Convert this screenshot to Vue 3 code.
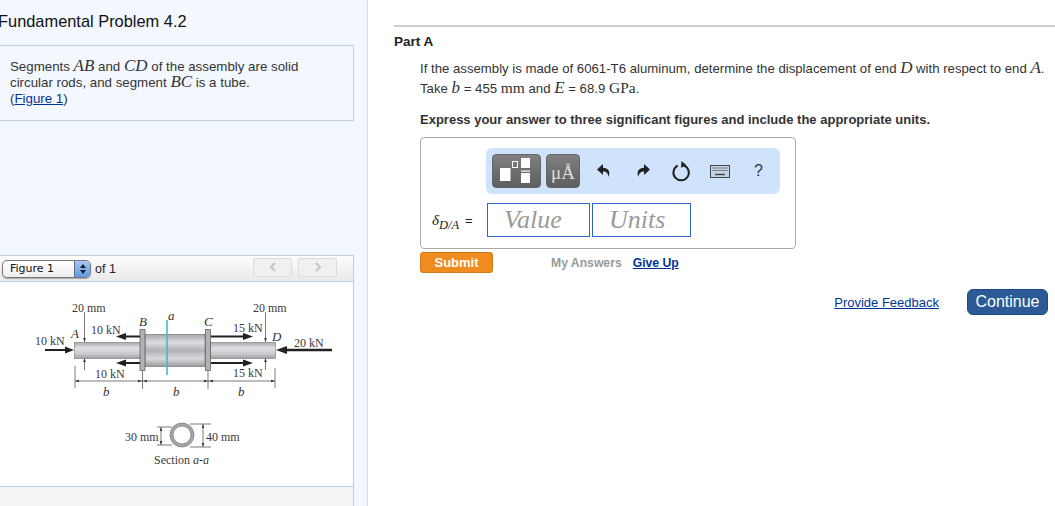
<script setup>
const dims = [
  { x: 72, y: 312, t: '20 mm' }, { x: 253, y: 312, t: '20 mm' },
  { x: 35, y: 345, t: '10 kN' }, { x: 91, y: 334, t: '10 kN' },
  { x: 233, y: 332, t: '15 kN' }, { x: 294, y: 347, t: '20 kN' },
  { x: 95, y: 378, t: '10 kN' }, { x: 233, y: 377, t: '15 kN' },
  { x: 125, y: 441, t: '30 mm' }, { x: 206, y: 441, t: '40 mm' }
]
const letters = [
  { x: 71, y: 338, t: 'A' }, { x: 139, y: 326, t: 'B' }, { x: 168, y: 320, t: 'a' },
  { x: 204, y: 326, t: 'C' }, { x: 272, y: 341, t: 'D' },
  { x: 103, y: 396, t: 'b' }, { x: 173, y: 396, t: 'b' }, { x: 238, y: 396, t: 'b' }
]
</script>

<template>
  <div class="page">
    <aside class="left">
      <h1 class="title">Fundamental Problem 4.2</h1>
      <div class="intro">
        Segments <i class="m">AB</i> and <i class="m">CD</i> of the assembly are solid<br />
        circular rods, and segment <i class="m">BC</i> is a tube.<br />
        (<a class="link" href="#">Figure 1</a>)
      </div>
      <section class="figure">
        <div class="figbar">
          <div class="select">
            <span class="sel-text">Figure 1</span>
            <span class="sel-arrows">
              <svg width="8" height="12" viewBox="0 0 8 12"><path d="M4 1 7 5H1zM4 11 1 7h6z" fill="#123" /></svg>
            </span>
          </div>
          <span class="of">of 1</span>
          <div class="navs">
            <button class="nav"><svg width="8" height="10" viewBox="0 0 8 10"><path d="M6 1 2 5l4 4" fill="none" stroke="#c4c4c4" stroke-width="2" /></svg></button>
            <button class="nav"><svg width="8" height="10" viewBox="0 0 8 10"><path d="M2 1l4 4-4 4" fill="none" stroke="#c4c4c4" stroke-width="2" /></svg></button>
          </div>
        </div>
        <div class="figimg">
          <svg class="diagram" width="353" height="204" viewBox="0 282 353 204">
            <defs>
              <linearGradient id="rod" x1="0" y1="0" x2="0" y2="1">
                <stop offset="0" stop-color="#a9abae" /><stop offset=".35" stop-color="#e0e1e4" />
                <stop offset=".7" stop-color="#c8cace" /><stop offset="1" stop-color="#a0a2a5" />
              </linearGradient>
              <linearGradient id="tube" x1="0" y1="0" x2="0" y2="1">
                <stop offset="0" stop-color="#a8aaad" /><stop offset=".25" stop-color="#dcdde0" />
                <stop offset=".5" stop-color="#b0b2b5" /><stop offset=".75" stop-color="#d8d9dc" />
                <stop offset="1" stop-color="#9a9c9f" />
              </linearGradient>
            </defs>
            <rect x="74.5" y="342.5" width="66" height="16" fill="url(#rod)" stroke="#777" stroke-width=".6" />
            <rect x="210" y="342.5" width="65.5" height="16" fill="url(#rod)" stroke="#777" stroke-width=".6" />
            <rect x="145" y="334.5" width="60" height="32" fill="url(#tube)" stroke="#666" stroke-width=".6" />
            <rect x="140" y="329.5" width="5" height="41" fill="#b0b2b5" stroke="#555" stroke-width=".7" />
            <rect x="205.5" y="329.5" width="5" height="41" fill="#b0b2b5" stroke="#555" stroke-width=".7" />
            <line x1="167" y1="320" x2="167" y2="375" stroke="#45b8cf" stroke-width="1.6" />
            <g stroke="#222" stroke-width="2" fill="#222">
              <line x1="45" y1="350" x2="68" y2="350" /><path d="M74 350l-9-3.500v7z" stroke="none" />
              <line x1="124" y1="336.5" x2="140" y2="336.5" /><path d="M116 336.500l10-3.500v7z" stroke="none" />
              <line x1="124" y1="363" x2="140" y2="363" /><path d="M116 363l10-3.500v7z" stroke="none" />
              <line x1="211" y1="336.5" x2="244" y2="336.5" /><path d="M253 336.500l-10-3.500v7z" stroke="none" />
              <line x1="211" y1="363" x2="244" y2="363" /><path d="M253 363l-10-3.500v7z" stroke="none" />
              <line x1="286" y1="350" x2="332" y2="350" stroke-width="2.6" /><path d="M276 350l11-4v8z" stroke="none" />
            </g>
            <g stroke="#444" stroke-width=".7" fill="none">
              <path d="M84.500 312v30M84.500 360v10M265.500 312v30M265.500 360v10" />
              <path d="M75 366v22M142.500 371v18M208 371v18M275 368v20" />
              <path d="M75 381h200" />
              <path d="M157 427h15M157 445h15M161 427v18M190 424h21M190 447h21M203 424v23" />
            </g>
            <g fill="#333">
              <path d="M84.500 342l-1.300-4h2.600zM84.500 358l-1.300 4h2.600zM265.500 342l-1.300-4h2.600zM265.500 358l-1.300 4h2.600z" />
              <path d="M75 381l4-1.200v2.400zM142 381l-4-1.200v2.400zM143 381l4-1.200v2.400zM208 381l-4-1.200v2.400zM209 381l4-1.200v2.400zM275 381l-4-1.200v2.400z" />
              <path d="M161 427l-1.200 4h2.400zM161 445l-1.200-4h2.400zM203 424l-1.200 4h2.400zM203 447l-1.200-4h2.400z" />
            </g>
            <circle cx="182" cy="435" r="10.5" fill="#fff" stroke="#a6a8ab" stroke-width="3" />
            <circle cx="182" cy="435" r="12" fill="none" stroke="#666" stroke-width=".6" />
            <circle cx="182" cy="435" r="9" fill="none" stroke="#666" stroke-width=".6" />
            <text v-for="d in dims" :key="d.x + '-' + d.y" :x="d.x" :y="d.y" class="dim">{{ d.t }}</text>
            <text v-for="l in letters" :key="l.x + '-' + l.y" :x="l.x" :y="l.y" class="letter">{{ l.t }}</text>
            <text x="154" y="464" class="dim">Section <tspan font-style="italic">a-a</tspan></text>
          </svg>
        </div>
        <div class="figfoot"></div>
      </section>
    </aside>

    <main class="right">
      <h2 class="part">Part A</h2>
      <div class="body">
        <p class="q">If the assembly is made of 6061-T6 aluminum, determine the displacement of end <i class="m">D</i> with respect to end <i class="m">A</i>.<br />
          Take <i class="m">b</i> = 455 <span class="r">mm</span> and <i class="m">E</i> = 68.9 <span class="r">GPa</span>.</p>
        <p class="express">Express your answer to three significant figures and include the appropriate units.</p>
        <div class="answer">
          <div class="toolbar">
            <button class="tool wide">
              <svg width="40" height="28" viewBox="0 0 40 28">
                <rect x="3" y="11" width="10.500" height="13" fill="#fff" />
                <rect x="15.500" y="4.500" width="5" height="6" fill="none" stroke="#fff" />
                <rect x="24" y="1" width="9" height="10" fill="#fff" />
                <rect x="24" y="13.500" width="9" height="1.200" fill="#fff" />
                <rect x="24" y="16" width="9" height="10" fill="#fff" />
              </svg>
            </button>
            <button class="tool unit">μÅ</button>
            <svg class="ic i1" width="16" height="18" viewBox="0 0 16 18"><path d="M7 2 1 7.500 7 13V9.500c3 0 4.800 1.200 5.600 5.500C14.800 9.500 12 5.800 7 5.800z" fill="#222" /></svg>
            <svg class="ic i2" width="16" height="18" viewBox="0 0 16 18"><path d="M9 2l6 5.500L9 13V9.500c-3 0-4.800 1.200-5.600 5.500C1.200 9.500 4 5.800 9 5.800z" fill="#222" /></svg>
            <svg class="ic i3" width="20" height="22" viewBox="0 0 18 20"><path d="M6 5.200a7 7 0 1 0 5.500-.3" fill="none" stroke="#222" stroke-width="1.800" /><path d="M9.500 1l4.500 3.800-5 2.200z" fill="#222" /></svg>
            <svg class="ic i4" width="20" height="13" viewBox="0 0 20 13">
              <rect x=".5" y=".5" width="19" height="12" fill="#c6d4e2" stroke="#445" />
              <path d="M2.500 3h15M2.500 5.500h15" stroke="#445" stroke-dasharray="1.200 .8" />
              <path d="M5 9.500h10" stroke="#445" stroke-width="1.500" />
            </svg>
            <span class="help">?</span>
          </div>
          <div class="entry">
            <span class="lab"><i>δ</i><sub>D/A</sub> <span class="eq">=</span></span>
            <input class="val" placeholder="Value" />
            <input class="uni" placeholder="Units" />
          </div>
        </div>
        <div class="actions">
          <button class="submit">Submit</button>
          <span class="my">My Answers</span>
          <a class="give" href="#">Give Up</a>
        </div>
      </div>
      <div class="foot">
        <a class="feedback" href="#">Provide Feedback</a>
        <button class="continue">Continue</button>
      </div>
    </main>
  </div>
</template>

<style>
html, body { margin: 0; background: #fff; overflow: hidden; }
</style>

<style scoped>
.page { display: flex; width: 1055px; height: 506px; overflow: hidden; font-family: "Liberation Sans", Arial, sans-serif; color: #222; }
.left { width: 368px; flex: none; box-sizing: border-box; background: #f3f8ff; border-right: 1px solid #d5dde6; overflow: hidden; }
.title { margin: 0; height: 45px; padding: 12px 0 0 0; box-sizing: border-box; margin-left: -2px; font-size: 16.400px; line-height: 19px; font-weight: 400; color: #111; white-space: nowrap; }
.intro { width: 354px; height: 76px; box-sizing: border-box; border: 1px solid #c0d0df; border-left: 0; padding: 13px 0 0 10px; font-size: 13.300px; line-height: 16px; color: #333; white-space: nowrap; }
.m { font-family: "Liberation Serif", serif; font-size: 17px; font-style: italic; line-height: 0; }
.r { font-family: "Liberation Serif", serif; font-size: 15.500px; line-height: 0; }
.link { color: #00339a; }
.figure { width: 354px; margin-top: 134px; height: 260px; box-sizing: border-box; border: 1px solid #bccfe0; border-left: 0; background: #fff; }
.figbar { height: 26px; box-sizing: border-box; display: flex; align-items: center; padding-left: 2px; background: linear-gradient(#fdfdfd, #e9e9e9); border-bottom: 1px solid #bccfe0; }
.select { width: 89px; height: 18px; box-sizing: border-box; display: flex; border: 1px solid #777; border-radius: 5px; background: linear-gradient(#fff, #eee); overflow: hidden; box-shadow: 0 1px 1px #aaa; }
.sel-text { flex: 1; font-family: "DejaVu Sans", sans-serif; font-size: 11px; line-height: 16px; padding-left: 7px; color: #111; }
.sel-arrows { width: 15px; display: flex; align-items: center; justify-content: center; background: linear-gradient(#a8c8f0, #5d9be0); border-left: 1px solid #668; }
.of { margin-left: 4px; font-size: 12.500px; color: #223; }
.navs { margin-left: auto; margin-right: 16px; display: flex; gap: 6px; margin-top: -3px; }
.nav { width: 39px; height: 19px; padding: 0; box-sizing: border-box; display: flex; align-items: center; justify-content: center; background: #f0f0f0; border: 1px solid #dcdcdc; border-radius: 2px; }
.figimg { height: 204px; }
.diagram { display: block; }
.dim { font-family: "Liberation Serif", serif; font-size: 12px; fill: #3a3a3a; }
.letter { font-family: "Liberation Serif", serif; font-style: italic; font-size: 13px; fill: #333; }
.figfoot { height: 20px; border-top: 1px solid #bccfe0; background: #f5f5f5; }

.right { flex: 1; min-width: 0; padding: 25px 0 0 26px; }
.part { margin: 0; border-top: 2px solid #ccc; padding-top: 7px; font-size: 13.500px; line-height: 16px; font-weight: 700; color: #222; }
.body { padding-left: 26px; }
.q { margin: 9px 0 0; font-size: 13.200px; line-height: 20px; color: #333; white-space: nowrap; }
.express { margin: 13px 0 0; font-size: 13px; line-height: 16px; font-weight: 700; color: #333; }
.answer { margin-top: 9px; width: 376px; height: 112px; box-sizing: border-box; border: 1px solid #aaa; border-radius: 4px; padding-top: 10px; }
.toolbar { margin-left: 65px; width: 294px; height: 46px; box-sizing: border-box; border-radius: 6px; background: #cfe3fd; display: flex; align-items: center; padding-left: 6px; }
.tool { height: 34px; padding: 0; border: 1px solid #666; border-radius: 4px; background: linear-gradient(#808080, #5e5e5e); display: flex; align-items: center; justify-content: center; }
.wide { width: 49px; }
.unit { width: 34px; margin-left: 5px; font-family: "Liberation Serif", serif; font-size: 19px; color: #ddd; padding-top: 3px; }
.ic { flex: none; }
.i1 { margin-left: 16px; }
.i2 { margin-left: 23px; }
.i3 { margin-left: 20px; }
.i4 { margin-left: 19px; }
.help { margin-left: 24px; font-size: 16px; color: #334; }
.entry { display: flex; align-items: center; margin-top: 9px; }
.lab { width: 66px; box-sizing: border-box; padding-left: 11px; font-family: "Liberation Serif", serif; font-size: 15px; line-height: 20px; color: #222; white-space: nowrap; }
.lab sub { font-size: 12.500px; font-style: italic; line-height: 0; }
.eq { font-family: "Liberation Sans", sans-serif; font-size: 13px; margin-left: 2px; }
.val, .uni { height: 34px; box-sizing: border-box; border: 1px solid #2f66c8; background: #fff; outline: none; font-family: "Liberation Serif", serif; font-style: italic; font-size: 26px; padding: 0 0 0 16px; }
.val { width: 103px; }
.uni { width: 99px; margin-left: 2px; }
.val::placeholder, .uni::placeholder { color: #9a9a9a; opacity: 1; }
.actions { display: flex; align-items: center; margin-top: 3px; }
.submit { width: 73px; height: 21px; padding: 0; border: 1px solid #d07a18; border-radius: 3px; background: #ef8b1f; color: #fff; font-family: "Liberation Sans", sans-serif; font-weight: 700; font-size: 13px; }
.my { margin-left: 58px; font-size: 12.200px; font-weight: 700; color: #999; }
.give { margin-left: 11px; font-size: 12.200px; font-weight: 700; color: #00339a; }
.foot { display: flex; align-items: center; justify-content: flex-end; margin-top: 16px; padding-right: 7px; }
.feedback { font-size: 13px; color: #00339a; }
.continue { margin-left: 28px; width: 81px; height: 26px; padding: 0; border: 1px solid #1d4a85; border-radius: 6px; background: #2b5a96; color: #fff; font-family: "Liberation Sans", sans-serif; font-size: 16px; }
</style>
